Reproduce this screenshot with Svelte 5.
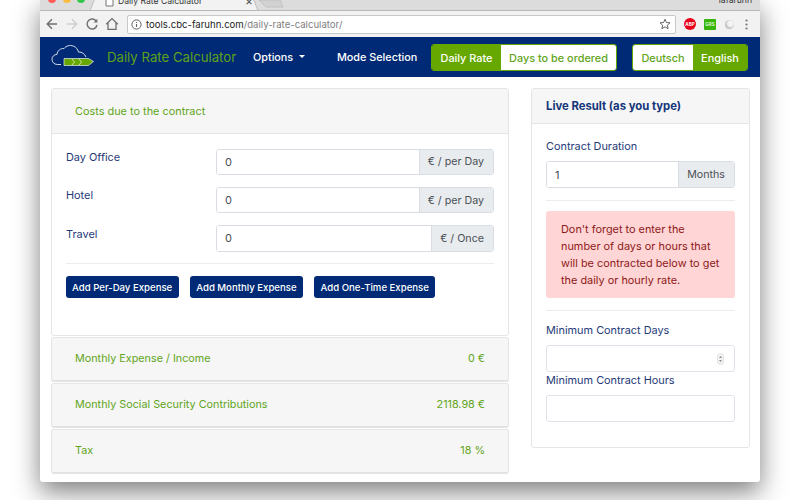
<script>
  const rows = [
    { label: 'Day Office', unit: '€ / per Day' },
    { label: 'Hotel', unit: '€ / per Day' },
    { label: 'Travel', unit: '€ / Once' }
  ];
  const buttons = ['Add Per-Day Expense', 'Add Monthly Expense', 'Add One-Time Expense'];
  const summaries = [
    { label: 'Monthly Expense / Income', value: '0 €' },
    { label: 'Monthly Social Security Contributions', value: '2118.98 €' },
    { label: 'Tax', value: '18 %' }
  ];
</script>

<div class="stage">
  <div class="win">
    <div class="tabbar">
      <svg class="tabshape" width="720" height="10" viewBox="0 0 720 10" aria-hidden="true">
        <path d="M50 11 L55 -2 H213 L218 11 Z" fill="#f2f2f2" stroke="#b5b5b5" stroke-width="0.8" />
        <path d="M219 0 L226 7 H243 L240 0 Z" fill="#d2d2d2" stroke="#bcbcbc" stroke-width="0.8" />
      </svg>
      <span class="light red"></span>
      <span class="light yellow"></span>
      <span class="light green"></span>
      <svg class="favicon" width="9" height="8" viewBox="0 0 9 8" aria-hidden="true"><path d="M1 -2 H8 V6 H1 Z" fill="#fff" stroke="#777" stroke-width="1" /></svg>
      <span class="tabtitle">Daily Rate Calculator</span>
      <span class="tabclose">×</span>
      <span class="profile">lafaruhn</span>
    </div>

    <div class="toolbar">
      <svg class="tb back" width="14" height="14" viewBox="0 0 14 14" aria-hidden="true"><path d="M12 7H2.500M7 2.200 2.200 7 7 11.800" fill="none" stroke="#6e6e6e" stroke-width="1.4" /></svg>
      <svg class="tb fwd" width="14" height="14" viewBox="0 0 14 14" aria-hidden="true"><path d="M2 7h9.500M7 2.200 11.800 7 7 11.800" fill="none" stroke="#cfcfcf" stroke-width="1.4" /></svg>
      <svg class="tb reload" width="14" height="14" viewBox="0 0 14 14" aria-hidden="true"><path d="M11.500 4.600A5 5 0 1 0 12 8" fill="none" stroke="#6e6e6e" stroke-width="1.4" /><path d="M12.400 1.800V5.600H8.600Z" fill="#6e6e6e" /></svg>
      <svg class="tb home" width="14" height="14" viewBox="0 0 14 14" aria-hidden="true"><path d="M1.200 7.200 7 1.600l5.800 5.600M3 6v6.400h8V6" fill="none" stroke="#6e6e6e" stroke-width="1.3" /></svg>
      <div class="url">
        <svg width="11" height="11" viewBox="0 0 11 11" aria-hidden="true"><circle cx="5.500" cy="5.500" r="4.600" fill="none" stroke="#5f5f5f" stroke-width="1" /><path d="M5.500 5v3M5.500 3v1" stroke="#5f5f5f" stroke-width="1.1" /></svg>
        <span class="host">tools.cbc-faruhn.com<span class="path">/daily-rate-calculator/</span></span>
        <svg class="star" width="12" height="12" viewBox="0 0 12 12" aria-hidden="true"><path d="M6 1.200 7.400 4.500l3.600.3-2.700 2.400.8 3.500L6 8.800 2.900 10.700l.8-3.500L1 4.800l3.600-.3Z" fill="none" stroke="#666" stroke-width="1" /></svg>
      </div>
      <div class="ext">
        <span class="abp">ABP</span>
        <span class="grn">GRS</span>
        <span class="orb"></span>
        <svg class="dots" width="3" height="11" viewBox="0 0 3 11" aria-hidden="true"><circle cx="1.500" cy="1.500" r="1.100" fill="#777" /><circle cx="1.500" cy="5.500" r="1.100" fill="#777" /><circle cx="1.500" cy="9.500" r="1.100" fill="#777" /></svg>
      </div>
    </div>

    <nav class="navbar">
      <svg class="logo" width="44" height="24" viewBox="0 0 44 24" aria-hidden="true">
        <path d="M10 20.500H6.500C3 20.500 1 18 1 15.300 1 12.500 3.200 10.400 6 10.400 6.300 6.800 9.500 4 13 4.600 15 1.800 19 0.800 22.200 2 25.400 3.200 27 5.600 27.400 8 31 7.800 33.800 10 35 13" fill="none" stroke="#e8eef5" stroke-width="0.9" />
        <path d="M13 14.500H37.500L42.500 17.500 37.500 21.500H13Z" fill="#66a800" stroke="#e8eef5" stroke-width="0.7" />
        <path d="M21 15l2.500 3-2.500 3M28 15l2.500 3-2.500 3" fill="none" stroke="#d5e6b5" stroke-width="0.9" />
      </svg>
      <span class="brand">Daily Rate Calculator</span>
      <span class="navlink options">Options <i class="caret"></i></span>
      <span class="navlink mode">Mode Selection</span>
      <div class="group first">
        <span class="seg on s70">Daily Rate</span>
        <span class="seg s116">Days to be ordered</span>
      </div>
      <div class="group">
        <span class="seg s61">Deutsch</span>
        <span class="seg on s55">English</span>
      </div>
    </nav>

    <main class="content">
      <section class="left">
        <div class="card costs">
          <header class="costhead">Costs due to the contract</header>
          <div class="costbody">
            {#each rows as r}
              <div class="row">
                <span class="rowlabel">{r.label}</span>
                <div class="ig wide">
                  <input class="field" value="0" />
                  <span class="addon">{r.unit}</span>
                </div>
              </div>
            {/each}
            <hr class="rule" />
            <div class="btns">
              {#each buttons as b}
                <button class="btn">{b}</button>
              {/each}
            </div>
          </div>
        </div>
        {#each summaries as s}
          <div class="summary">
            <span>{s.label}</span>
            <span>{s.value}</span>
          </div>
        {/each}
      </section>

      <aside class="card right">
        <header class="livehead">Live Result (as you type)</header>
        <div class="livebody">
          <div class="lab">Contract Duration</div>
          <div class="ig">
            <input class="field" value="1" />
            <span class="addon">Months</span>
          </div>
          <hr class="rule r1" />
          <div class="alert">Don't forget to enter the number of days or hours that will be contracted below to get the daily or hourly rate.</div>
          <hr class="rule r2" />
          <div class="lab l2">Minimum Contract Days</div>
          <div class="box spin">
            <svg width="7" height="12" viewBox="0 0 7 12" aria-hidden="true"><rect x="0.500" y="0.500" width="6" height="11" rx="3" fill="#f3f3f3" stroke="#d5d5d5" stroke-width="0.6" /><path d="M2 5 3.500 3 5 5ZM2 7 3.500 9 5 7Z" fill="#8a8a8a" /></svg>
          </div>
          <div class="lab l3">Minimum Contract Hours</div>
          <div class="box"></div>
        </div>
      </aside>
    </main>
  </div>
</div>

<style>
  :global(body) { margin: 0; }
  .stage {
    width: 800px; height: 500px; overflow: hidden; background: #fff;
    padding-left: 40px; box-sizing: border-box;
    font-family: Inter, "Liberation Sans", sans-serif;
    font-size: 10.9px; color: #1f3a78;
  }
  .win {
    width: 720px; height: 482px; background: #fff; overflow: hidden;
    border-radius: 0 0 3px 3px;
    box-shadow: 0 10px 26px rgba(0,0,0,.5);
    display: flex; flex-direction: column;
  }
  .tabbar {
    height: 10px; flex: none; background: #dcdcdc; position: relative; overflow: hidden;
    display: flex; align-items: flex-end;
  }
  .tabshape { position: absolute; left: 0; top: 0; }
  .light { position: absolute; top: -5px; width: 8px; height: 8px; border-radius: 50%; }
  .red { left: 8px; background: #fc5b57; }
  .yellow { left: 23px; background: #fdbc40; }
  .green { left: 37px; background: #34c84a; }
  .favicon { position: absolute; left: 65px; top: 0; }
  .tabtitle { position: absolute; left: 78px; top: -5px; font-size: 8.6px; line-height: 12px; color: #333; }
  .tabclose { position: absolute; left: 205px; top: -6px; font-size: 12px; line-height: 13px; color: #555; }
  .profile { position: absolute; right: 8px; top: -6px; font-size: 8.6px; line-height: 12px; color: #333; }
  .toolbar {
    height: 27px; flex: none; background: #f2f2f2; border-top: 1px solid #b8b8b8;
    box-sizing: border-box; display: flex; align-items: center; padding-left: 5px;
  }
  .tb { flex: none; margin-right: 6px; }
  .url {
    width: 549px; height: 19px; box-sizing: border-box; margin-left: 2px; background: #fff;
    border: 1px solid #c8c8c8; border-radius: 2px; display: flex; align-items: center; gap: 4px; padding: 0 4px 0 3px;
  }
  .host { font-size: 9.6px; color: #222; flex: 1; }
  .path { color: #808080; }
  .star { flex: none; }
  .ext { display: flex; align-items: center; margin-left: 8px; gap: 8px; }
  .abp {
    width: 12px; height: 12px; border-radius: 50%; background: #e8001c; color: #fff; font-size: 4.5px; font-weight: 700;
    display: flex; align-items: center; justify-content: center;
  }
  .grn {
    width: 12px; height: 11px; border-radius: 1px; background: #36b50c; color: #d8f5cd; font-size: 4.5px; font-weight: 700;
    display: flex; align-items: center; justify-content: center;
  }
  .orb {
    width: 9px; height: 9px; border-radius: 50%; background: radial-gradient(circle at 60% 40%, #f4f4f4 30%, #aaa 80%); margin-left: 1px;
  }
  .dots { margin-left: 3px; }
  .navbar {
    height: 40px; flex: none; background: #002a75; box-sizing: border-box; display: flex; align-items: center;
    padding-left: 11px; color: #fff;
  }
  .logo { flex: none; margin-top: -2px; }
  .brand { color: #5fa31a; font-size: 13.2px; margin-left: 12px; width: 146px; white-space: nowrap; }
  .navlink { font-size: 10.8px; font-weight: 500; white-space: nowrap; }
  .options { width: 84px; }
  .mode { width: 94px; }
  .caret {
    display: inline-block; border-top: 3.500px solid #fff; border-left: 3.500px solid transparent; border-right: 3.500px solid transparent;
    vertical-align: middle; margin: 0 0 2px 3px;
  }
  .group { display: flex; height: 27px; border-radius: 3px; overflow: hidden; border: 1px solid #66a800; box-sizing: border-box; margin-top: 1px; }
  .first { margin-right: 15px; }
  .seg { display: flex; align-items: center; justify-content: center; background: #fff; color: #62a51a; font-size: 10.9px; font-weight: 500; white-space: nowrap; }
  .seg.on { background: #66a800; color: #fff; }
  .s70 { width: 69px; }
  .s116 { width: 115px; }
  .s61 { width: 60px; }
  .s55 { width: 54px; }
  .content { display: flex; gap: 22px; padding: 11px 11px 0; align-items: flex-start; }
  .card { border: 1px solid #e3e5e8; border-radius: 3px; box-sizing: border-box; background: #fff; }
  .left { width: 458px; flex: none; }
  .costs { height: 247.500px; }
  .costhead {
    height: 45px; box-sizing: border-box; background: #f6f6f6; border-bottom: 1px solid #e3e5e8; color: #62a51a;
    padding-left: 23px; display: flex; align-items: center; font-size: 10.9px; border-radius: 3px 3px 0 0;
  }
  .costbody { padding: 14.500px 14px 0; }
  .row { display: flex; height: 26.500px; margin-bottom: 11.800px; }
  .rowlabel { width: 150px; flex: none; font-size: 10.9px; line-height: 16px; padding-top: 0.500px; }
  .ig { display: flex; height: 27px; box-sizing: border-box; border: 1px solid #d9dde3; border-radius: 3px; overflow: hidden; }
  .wide { flex: 1; height: 26.500px; }
  .field {
    flex: 1; min-width: 0; border: 0; outline: 0; padding: 0 8px; font: inherit; font-size: 11px; color: #495057; background: #fff;
  }
  .addon {
    flex: none; background: #e9ecef; color: #495057; font-size: 10.7px; padding: 0 9px 0 8px; display: flex; align-items: center;
    border-left: 1px solid #d9dde3; white-space: nowrap;
  }
  .rule { border: 0; border-top: 1px solid #ececec; margin: 0; }
  .btns { display: flex; gap: 11px; margin-top: 12px; margin-left: -0.500px; }
  .btn {
    background: #002a75; color: #fff; border: 0; border-radius: 3px; height: 22px; padding: 0 6.500px; font: inherit; font-size: 9.6px; font-weight: 500; white-space: nowrap;
  }
  .summary {
    height: 45px; box-sizing: border-box; margin-top: 1px; background: #f6f6f6; border: 1px solid #e5e5e5; border-bottom: 2px solid #e3e3e3;
    border-radius: 3px; color: #62a51a; font-size: 10.8px; display: flex; align-items: center; justify-content: space-between; padding: 0 23px;
  }
  .right { width: 219px; flex: none; height: 360px; }
  .livehead {
    height: 35px; box-sizing: border-box; background: #f6f6f6; border-bottom: 1px solid #e3e5e8; padding-left: 14px;
    display: flex; align-items: center; font-weight: 700; font-size: 11.300px; color: #13357a; border-radius: 3px 3px 0 0;
  }
  .livebody { padding: 15px 14px 0; }
  .lab { font-size: 10.9px; line-height: 15px; }
  .livebody .ig { margin-top: 7px; }
  .r1 { margin-top: 12px; }
  .alert {
    margin-top: 10px; height: 87px; box-sizing: border-box; background: #ffd5d5; border-radius: 3px; color: #8e1a1a; font-size: 10.9px;
    line-height: 17px; padding: 10px 15px;
  }
  .r2 { margin-top: 12px; }
  .l2 { margin-top: 12px; }
  .box {
    height: 27px; box-sizing: border-box; border: 1px solid #dfe2e8; border-radius: 3px; margin-top: 7px;
    display: flex; align-items: center; justify-content: flex-end; padding-right: 10px;
  }
  .l3 { margin-top: 1px; }
</style>
